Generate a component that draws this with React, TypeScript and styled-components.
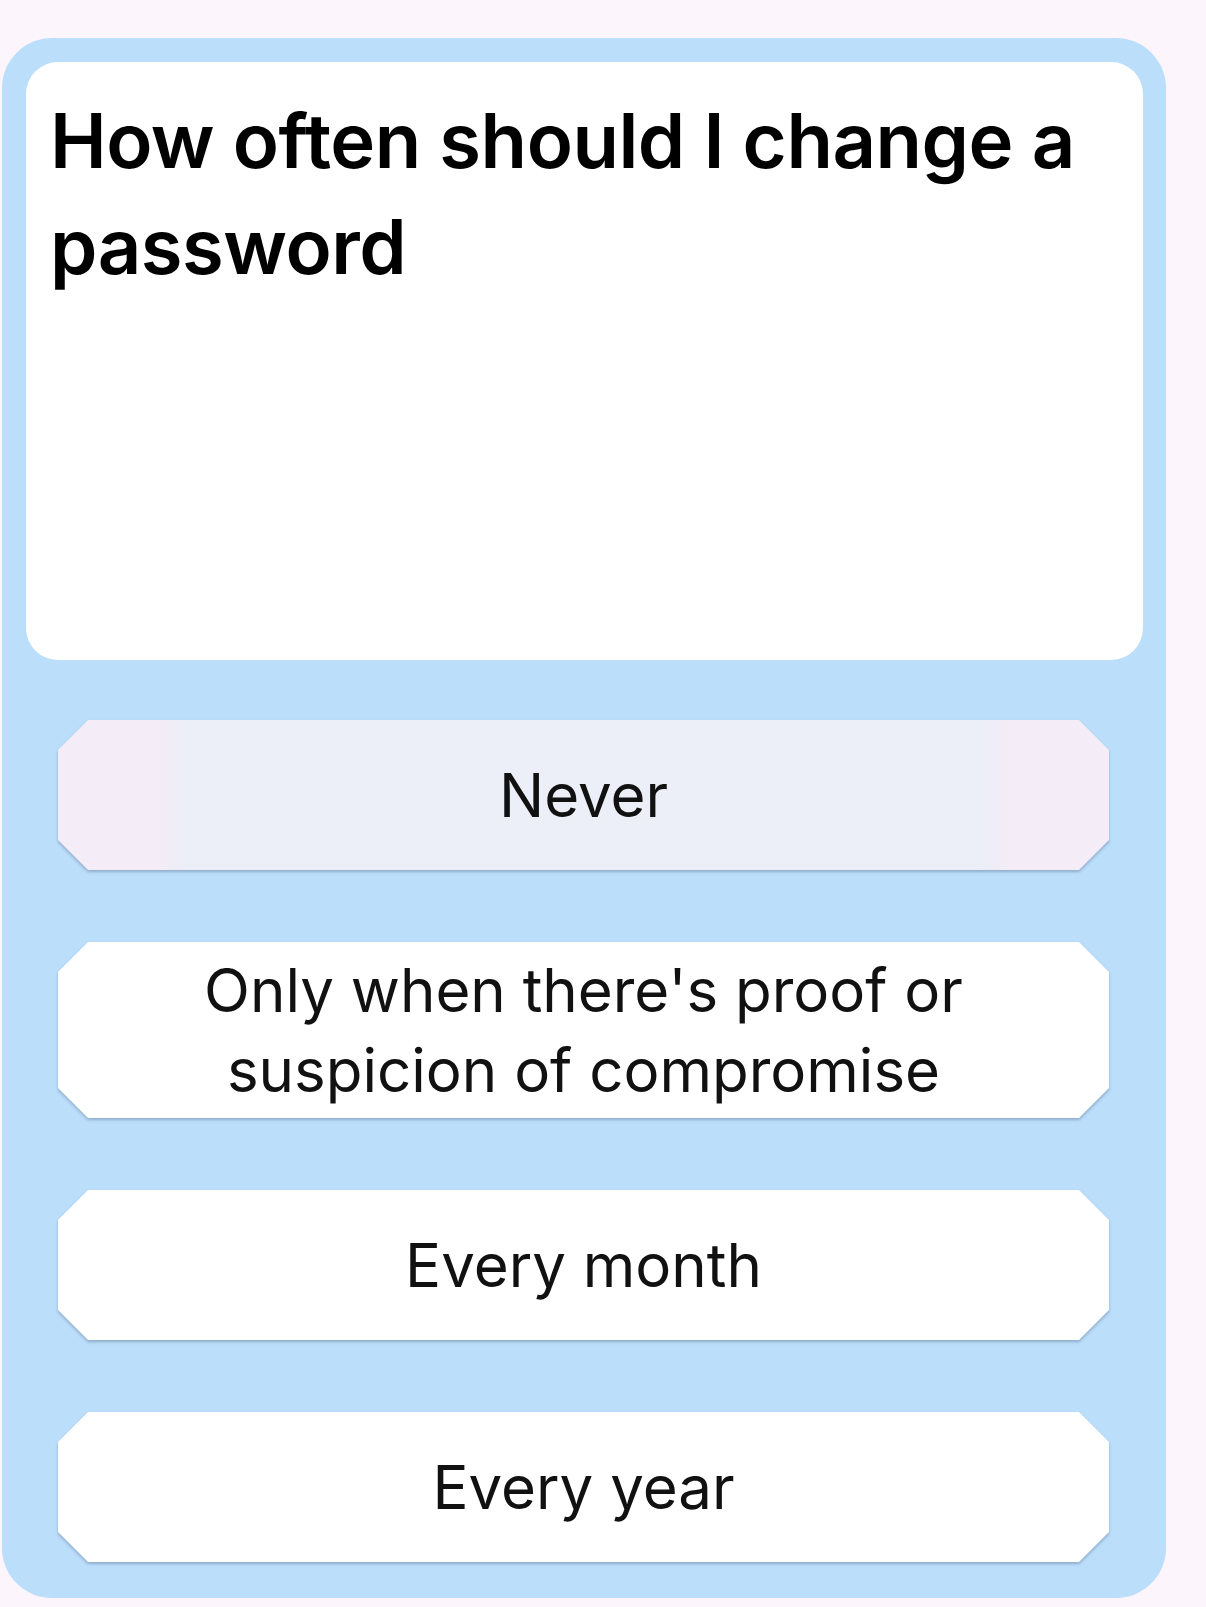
import styled, { createGlobalStyle } from 'styled-components';

const GlobalStyle = createGlobalStyle`
  html, body {
    margin: 0;
    padding: 0;
    background: #fcf5fc;
  }
  body {
    font-family: Inter, 'Noto Sans', sans-serif;
    color: #000;
  }
`;

const Page = styled.div`
  width: 1206px;
  min-height: 1607px;
  padding: 38px 0 0 2px;
  box-sizing: border-box;
`;

const Card = styled.section`
  width: 1164px;
  box-sizing: border-box;
  padding: 24px 23px 36px 24px;
  background: #bbdefb;
  border-radius: 50px;
  display: flex;
  flex-direction: column;
`;

const QuestionBox = styled.div`
  height: 598px;
  box-sizing: border-box;
  padding: 25px 24px;
  background: #fff;
  border-radius: 32px;
`;

const Question = styled.h1`
  margin: 0;
  font-size: 76px;
  line-height: 106px;
  font-weight: 600;
  letter-spacing: -0.5px;
  font-variant-ligatures: none;
`;

const Options = styled.div`
  display: flex;
  flex-direction: column;
  gap: 72px;
  padding: 60px 34px 0 32px;
`;

const OptionSlot = styled.div`
  filter: drop-shadow(0 2px 1.5px rgba(40, 60, 90, 0.3));
`;

const OptionButton = styled.button<{ $active?: boolean }>`
  width: 100%;
  min-height: 150px;
  box-sizing: border-box;
  padding: 8px 24px;
  border: none;
  display: flex;
  align-items: center;
  justify-content: center;
  text-align: center;
  font-family: Inter, 'Noto Sans', sans-serif;
  font-size: 60px;
  line-height: 80px;
  font-weight: 400;
  color: #111;
  cursor: pointer;
  clip-path: polygon(
    30px 0,
    calc(100% - 30px) 0,
    100% 30px,
    100% calc(100% - 30px),
    calc(100% - 30px) 100%,
    30px 100%,
    0 calc(100% - 30px),
    0 30px
  );
  background: ${(p) =>
    p.$active
      ? 'linear-gradient(90deg, #f4ecf6 0%, #f4ecf6 9.5%, #eceef8 12%, #eceef8 88%, #f4ecf6 90.5%, #f4ecf6 100%)'
      : '#fff'};
`;

const answers = [
  'Never',
  "Only when there's proof or suspicion of compromise",
  'Every month',
  'Every year',
];

export default function App() {
  return (
    <>
      <GlobalStyle />
      <Page>
        <Card>
          <QuestionBox>
            <Question>How often should I change a password</Question>
          </QuestionBox>
          <Options>
            {answers.map((a, i) => (
              <OptionSlot key={a}>
                <OptionButton $active={i === 0}>{a}</OptionButton>
              </OptionSlot>
            ))}
          </Options>
        </Card>
      </Page>
    </>
  );
}
